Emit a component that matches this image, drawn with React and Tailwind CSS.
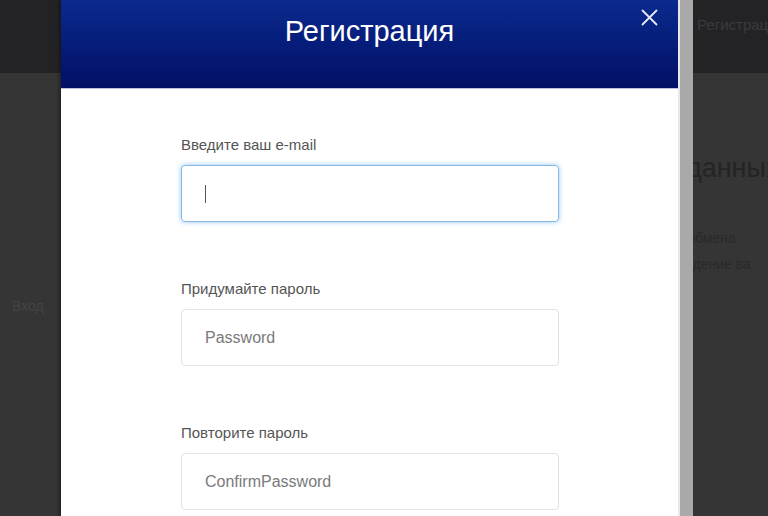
export default function App() {
  const font = { fontFamily: '"Liberation Sans", Arial, sans-serif' };
  return (
    <div className="relative w-[768px] h-[516px] overflow-hidden bg-[#353535]" style={font}>
      {/* background page */}
      <div className="h-[73px] bg-[#232325] flex items-start pt-[16px] pl-[697px] whitespace-nowrap">
        <span className="text-[15px] leading-[18px] text-[#3a3a3e]">Регистрация</span>
      </div>
      <div className="flex">
        <div className="w-[61px] pt-[221px] pl-[12px] whitespace-nowrap">
          <span className="text-[14px] text-[#444]">Вход</span>
        </div>
        <div className="flex-1 pl-[625px] pt-[78px] whitespace-nowrap">
          <div className="text-[27px] text-[#242424] leading-[34px] -ml-[6px]">д данных</div>
          <div className="mt-[40px] text-[14px] text-[#2a2a2a] leading-[26px]">са обмена</div>
          <div className="text-[14px] text-[#2a2a2a] leading-[26px]">хождение ва</div>
        </div>
      </div>

      {/* modal overlay */}
      <div className="absolute left-[61px] top-0 h-[516px] flex">
        <div className="w-[617px] h-full bg-white shadow-[-2px_0_3px_rgba(0,0,0,0.35)]">
          <div className="relative h-[89px] bg-gradient-to-b from-[#0b2a8e] to-[#030f66] border-b border-[#b9bfdc]">
            <div className="pt-[15px] text-center text-white text-[29px] leading-[33px]">Регистрация</div>
            <svg className="absolute left-[580px] top-[9px]" width="17" height="17" viewBox="0 0 17 17">
              <path d="M1.5 1.5 L15.5 15.5 M15.5 1.5 L1.5 15.5" stroke="#e6e8f2" strokeWidth="1.8" strokeLinecap="round" />
            </svg>
          </div>
          <div className="pl-[120px] pt-[47px]">
            <div className="text-[15px] leading-[18px] text-[#555]">Введите ваш e-mail</div>
            <div className="mt-[11px] w-[378px] h-[57px] rounded-[4px] border border-[#86b9e6] shadow-[0_0_5px_rgba(102,170,233,0.7)] flex items-center pl-[23px]">
              <div className="w-[1px] h-[18px] bg-[#555]" />
            </div>

            <div className="mt-[58px] text-[15px] leading-[18px] text-[#555]">Придумайте пароль</div>
            <div className="mt-[11px] w-[378px] h-[57px] rounded-[4px] border border-[#e2e2e2] flex items-center pl-[23px]">
              <span className="text-[16px] text-[#7a7a7a]">Password</span>
            </div>

            <div className="mt-[58px] text-[15px] leading-[18px] text-[#555]">Повторите пароль</div>
            <div className="mt-[11px] w-[378px] h-[57px] rounded-[4px] border border-[#e2e2e2] flex items-center pl-[23px]">
              <span className="text-[16px] text-[#7a7a7a]">ConfirmPassword</span>
            </div>
          </div>
        </div>
        <div className="w-[2px] h-full bg-[#e8e8e8]" />
        <div className="w-[13px] h-full bg-[#a9a9a9]" />
      </div>
    </div>
  );
}
